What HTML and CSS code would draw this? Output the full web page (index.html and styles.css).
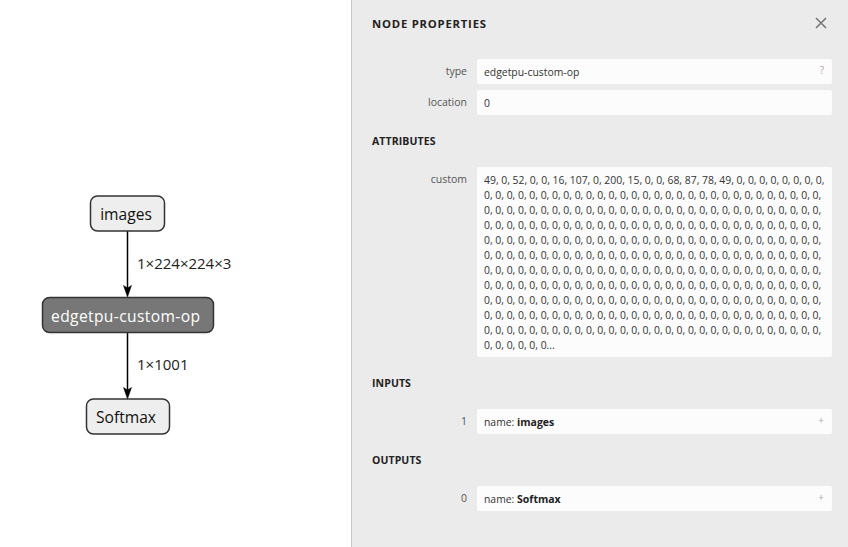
FILE: index.html
```html
<!DOCTYPE html>
<html lang="en">
<head>
<meta charset="utf-8">
<title>Node properties</title>
<link rel="stylesheet" href="styles.css">
</head>
<body>
<div class="app">
  <main class="graph">
    <svg class="graph-svg" width="351" height="547" viewBox="0 0 351 547" xmlns="http://www.w3.org/2000/svg">
      <path class="edge" d="M127.5 231V293"/>
      <path class="head" d="M127.5 297L123.5 285.5L127.5 288L131.5 285.5Z"/>
      <path class="edge" d="M127.5 332V395"/>
      <path class="head" d="M127.5 399L123.5 387.5L127.5 390L131.5 387.5Z"/>
      <text class="edge-label" x="137" y="269">1×224×224×3</text>
      <text class="edge-label" x="137" y="370">1×1001</text>
      <rect class="node" x="90.5" y="196" width="74" height="35" rx="7"/>
      <text class="node-label" x="126" y="220">images</text>
      <rect class="node node-op" x="42.5" y="297.5" width="171" height="35" rx="7"/>
      <text class="node-label node-label-op" x="125.5" y="322" textLength="149">edgetpu-custom-op</text>
      <rect class="node" x="86.5" y="399" width="83" height="35" rx="7"/>
      <text class="node-label" x="126" y="423">Softmax</text>
    </svg>
  </main>
  <aside class="panel">
    <header class="panel-head">
      <h1 class="heading">NODE PROPERTIES</h1>
      <svg class="close" width="12" height="12" viewBox="0 0 12 12" xmlns="http://www.w3.org/2000/svg"><path d="M1 1L11 11M11 1L1 11"/></svg>
    </header>
    <div class="row"><div class="label">type</div><div class="value"><span>edgetpu-custom-op</span><span class="toggle">?</span></div></div>
    <div class="row"><div class="label">location</div><div class="value"><span>0</span></div></div>
    <h2 class="heading section">ATTRIBUTES</h2>
    <div class="row"><div class="label">custom</div><div class="value value-block">49, 0, 52, 0, 0, 16, 107, 0, 200, 15, 0, 0, 68, 87, 78, 49, 0, 0, 0, 0, 0, 0, 0, 0,<br>
0, 0, 0, 0, 0, 0, 0, 0, 0, 0, 0, 0, 0, 0, 0, 0, 0, 0, 0, 0, 0, 0, 0, 0, 0, 0, 0, 0, 0, 0,<br>
0, 0, 0, 0, 0, 0, 0, 0, 0, 0, 0, 0, 0, 0, 0, 0, 0, 0, 0, 0, 0, 0, 0, 0, 0, 0, 0, 0, 0, 0,<br>
0, 0, 0, 0, 0, 0, 0, 0, 0, 0, 0, 0, 0, 0, 0, 0, 0, 0, 0, 0, 0, 0, 0, 0, 0, 0, 0, 0, 0, 0,<br>
0, 0, 0, 0, 0, 0, 0, 0, 0, 0, 0, 0, 0, 0, 0, 0, 0, 0, 0, 0, 0, 0, 0, 0, 0, 0, 0, 0, 0, 0,<br>
0, 0, 0, 0, 0, 0, 0, 0, 0, 0, 0, 0, 0, 0, 0, 0, 0, 0, 0, 0, 0, 0, 0, 0, 0, 0, 0, 0, 0, 0,<br>
0, 0, 0, 0, 0, 0, 0, 0, 0, 0, 0, 0, 0, 0, 0, 0, 0, 0, 0, 0, 0, 0, 0, 0, 0, 0, 0, 0, 0, 0,<br>
0, 0, 0, 0, 0, 0, 0, 0, 0, 0, 0, 0, 0, 0, 0, 0, 0, 0, 0, 0, 0, 0, 0, 0, 0, 0, 0, 0, 0, 0,<br>
0, 0, 0, 0, 0, 0, 0, 0, 0, 0, 0, 0, 0, 0, 0, 0, 0, 0, 0, 0, 0, 0, 0, 0, 0, 0, 0, 0, 0, 0,<br>
0, 0, 0, 0, 0, 0, 0, 0, 0, 0, 0, 0, 0, 0, 0, 0, 0, 0, 0, 0, 0, 0, 0, 0, 0, 0, 0, 0, 0, 0,<br>
0, 0, 0, 0, 0, 0, 0, 0, 0, 0, 0, 0, 0, 0, 0, 0, 0, 0, 0, 0, 0, 0, 0, 0, 0, 0, 0, 0, 0, 0,<br>
0, 0, 0, 0, 0, 0...</div></div>
    <h2 class="heading section">INPUTS</h2>
    <div class="row"><div class="label">1</div><div class="value"><span>name: <b>images</b></span><span class="toggle">+</span></div></div>
    <h2 class="heading section">OUTPUTS</h2>
    <div class="row"><div class="label">0</div><div class="value"><span>name: <b>Softmax</b></span><span class="toggle">+</span></div></div>
  </aside>
</div>
</body>
</html>
```
FILE: styles.css
```css
* { box-sizing: border-box; }
html, body { margin: 0; height: 100%; background: #fff; }
body { font-family: "Open Sans", "Noto Sans", sans-serif; font-size: 10.5px; color: #333; overflow: hidden; }
.app { display: flex; height: 547px; }
.graph { flex: 0 0 351px; }
.graph-svg { display: block; }
.edge { stroke: #000; stroke-width: 1.5; fill: none; }
.head { fill: #000; stroke: #000; stroke-width: 0.5; }
.node { fill: #eee; stroke: #333; stroke-width: 1.5; }
.node-op { fill: #777; }
.node-label { font-size: 15.6px; text-anchor: middle; fill: #111; }
.node-label-op { fill: #fff; }
.edge-label { font-size: 15px; fill: #222; }
.panel { flex: 1; background: #ebebeb; border-left: 1px solid #c8c8c8; padding: 14px 16px 0 20px; }
.panel-head { display: flex; justify-content: space-between; align-items: center; height: 20px; margin-bottom: 25px; }
.heading { margin: 0; font-size: 10.5px; font-weight: 700; line-height: 20px; color: #222; letter-spacing: 0.1px; }
.panel-head .heading { font-size: 11.3px; letter-spacing: 0.78px; }
.section { margin: 16px 0; height: 20px; }
.close { fill: none; stroke: #777; stroke-width: 1.6; margin-right: 5.5px; margin-top: -2px; }
.row { display: grid; grid-template-columns: 95px 355px; column-gap: 10px; margin-bottom: 6px; }
.row:has(+ .section) { margin-bottom: 0; }
.label { text-align: right; padding-top: 5px; line-height: 15px; color: #555; }
.value { background: #fcfcfc; border-radius: 2px; padding: 6px 6px 4px 7px; font-size: 10.4px; line-height: 15px; min-height: 25px; display: flex; justify-content: space-between; white-space: nowrap; }
.value-block { display: block; }
.value b { font-weight: 700; color: #222; font-size: 10.5px; }
.toggle { color: #aaa; font-size: 10px; line-height: 13px; margin: -1px 2px 0 0; }
```
